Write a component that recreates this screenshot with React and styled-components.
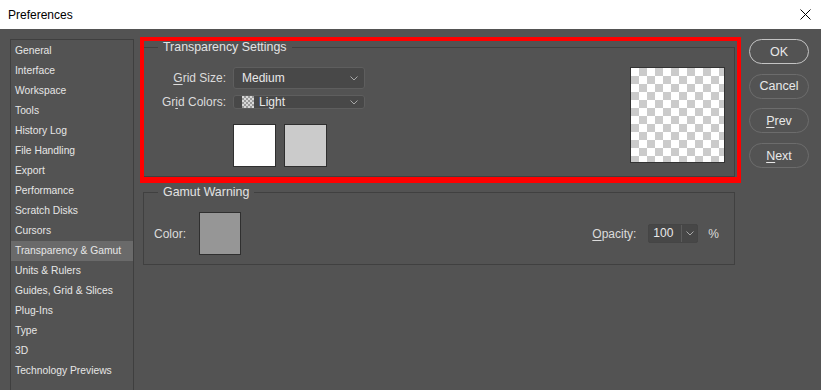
import React from 'react';
import styled, { createGlobalStyle } from 'styled-components';

const Global = createGlobalStyle`
  html, body { margin: 0; padding: 0; }
  body {
    width: 821px; height: 390px; overflow: hidden; background: #535353;
    font-family: "Liberation Sans", Arial, sans-serif;
  }
`;

const Window = styled.div`
  width: 821px; height: 390px; display: flex; flex-direction: column;
  background: #535353; position: relative; overflow: hidden;
`;

const TitleBar = styled.div`
  height: 29px; flex-shrink: 0; background: #fff; display: flex;
  align-items: center; justify-content: space-between;
  padding: 0 10px 0 8px; font-size: 12px; color: #000;
`;

const Body = styled.div`
  flex: 1; display: flex; align-items: flex-start;
  padding: 10px 12px 0 10px;
`;

const Sidebar = styled.div`
  width: 124px; box-sizing: border-box; height: 400px; flex-shrink: 0;
  border: 1px solid #3f3f3f; border-bottom: none; margin-right: 9px;
  padding-top: 1px;
  display: flex; flex-direction: column;
`;

const NavItem = styled.div`
  height: 20px; line-height: 20px; padding-left: 4px; font-size: 10.3px;
  color: #e6e6e6; white-space: nowrap;
  background: ${p => (p.$active ? '#6a6a6a' : 'transparent')};
`;

const Main = styled.div`
  width: 592px; flex-shrink: 0; margin-top: 0; margin-right: 14px;
  display: flex; flex-direction: column; gap: 7px;
`;

const Group = styled.fieldset`
  margin: 0; padding: 0; min-width: 0; box-sizing: border-box;
  border: 1px solid #404040; height: ${p => p.$h}px;
`;

const Legend = styled.legend`
  margin-left: 14px; padding: 0 5px; font-size: 12.4px; line-height: 16px;
  color: #e2e2e2;
`;

const SettingsRow = styled.div`
  display: flex; justify-content: space-between; align-items: flex-start;
  padding: 12px 10px 0 0;
`;

const Form = styled.div`
  display: grid; grid-template-columns: 82px 132px; column-gap: 7px;
  row-gap: 6px; align-items: center;
`;

const Label = styled.span`
  font-size: 12px; color: #dcdcdc; text-align: right; white-space: nowrap;
`;

const U = styled.span` text-decoration: underline; text-underline-offset: 2px; `;

const Select = styled.div`
  height: ${p => p.$h}px; box-sizing: border-box; border: 1px solid #5e5e5e;
  border-radius: 3px; background: #484848; display: flex; align-items: center;
  padding: 0 6px 0 8px; font-size: 12px; color: #e8e8e8; gap: 5px;
`;

const SelectText = styled.span` flex: 1; `;

const CheckerIcon = styled.span`
  width: 12px; height: 12px; flex-shrink: 0;
  background: repeating-conic-gradient(#9a9a9a 0 25%, #d8d8d8 0 50%) 0 0 / 4px 4px;
`;

const Swatches = styled.div`
  grid-column: 2; display: flex; gap: 8px; margin-top: 9px;
`;

const Swatch = styled.div`
  width: ${p => p.$w || 43}px; height: 43px; box-sizing: border-box;
  border: 1px solid #2f2f2f; background: ${p => p.$c};
`;

const Preview = styled.div`
  width: 95px; height: 96px; box-sizing: border-box; border: 1px solid #333;
  margin-right: -1px;
  background: repeating-conic-gradient(#cbcbcb 0 25%, #ffffff 0 50%) 0 0 / 16px 16px;
`;

const GamutRow = styled.div`
  display: flex; align-items: center; padding: 12px 15px 0 10px;
`;

const ColorLabel = styled(Label)` margin-right: 13px; `;

const Spacer = styled.div` flex: 1; `;

const NumberBox = styled.div`
  width: 50px; height: 19px; box-sizing: border-box; margin: 0 10px 0 12px;
  border: 1px solid #454545; border-radius: 2px; background: #474747;
  display: flex; font-size: 12px; color: #eaeaea;
`;

const NumberValue = styled.span`
  flex: 1; padding-left: 4px; line-height: 17px;
  border-right: 1px solid #5c5c5c;
`;

const NumberArrow = styled.span`
  width: 15px; display: flex; align-items: center; justify-content: center;
`;

const Buttons = styled.div`
  width: 60px; display: flex; flex-direction: column; gap: 9.7px;
`;

const Button = styled.div`
  height: 25px; box-sizing: border-box; border-radius: 13px;
  border: ${p => (p.$primary ? '1.5px solid #c4c4c4' : '1px solid #6c6c6c')};
  display: flex; align-items: center; justify-content: center;
  font-size: 12.5px; color: #e8e8e8;
`;

const Highlight = styled.div`
  position: absolute; left: 140px; top: 37px; width: 601px; height: 146px;
  box-sizing: border-box; border: 4px solid #ff0000; border-bottom-width: 6px;
  pointer-events: none;
`;

const Chevron = () => (
  <svg width="8" height="5" viewBox="0 0 8 5">
    <path d="M0.5 0.5 L4 4 L7.5 0.5" fill="none" stroke="#a8a8a8" strokeWidth="1" />
  </svg>
);

const CloseIcon = () => (
  <svg width="11" height="11" viewBox="0 0 11 11">
    <path d="M0.5 0.5 L10.5 10.5 M10.5 0.5 L0.5 10.5" stroke="#000" strokeWidth="1" />
  </svg>
);

const navItems = [
  'General', 'Interface', 'Workspace', 'Tools', 'History Log', 'File Handling',
  'Export', 'Performance', 'Scratch Disks', 'Cursors', 'Transparency & Gamut',
  'Units & Rulers', 'Guides, Grid & Slices', 'Plug-Ins', 'Type', '3D',
  'Technology Previews',
];

export default function App() {
  return (
    <Window>
      <Global />
      <TitleBar>
        <span>Preferences</span>
        <CloseIcon />
      </TitleBar>
      <Body>
        <Sidebar>
          {navItems.map(n => (
            <NavItem key={n} $active={n === 'Transparency & Gamut'}>{n}</NavItem>
          ))}
        </Sidebar>
        <Main>
          <Group $h={138}>
            <Legend>Transparency Settings</Legend>
            <SettingsRow>
              <Form>
                <Label><U>G</U>rid Size:</Label>
                <Select $h={22}>
                  <SelectText>Medium</SelectText>
                  <Chevron />
                </Select>
                <Label>Gr<U>i</U>d Colors:</Label>
                <Select $h={14}>
                  <CheckerIcon />
                  <SelectText>Light</SelectText>
                  <Chevron />
                </Select>
                <Swatches>
                  <Swatch $c="#ffffff" />
                  <Swatch $c="#cbcbcb" />
                </Swatches>
              </Form>
              <Preview />
            </SettingsRow>
          </Group>
          <Group $h={81}>
            <Legend>Gamut Warning</Legend>
            <GamutRow>
              <ColorLabel>Color:</ColorLabel>
              <Swatch $c="#969696" $w={42} />
              <Spacer />
              <Label><U>O</U>pacity:</Label>
              <NumberBox>
                <NumberValue>100</NumberValue>
                <NumberArrow><Chevron /></NumberArrow>
              </NumberBox>
              <Label>%</Label>
            </GamutRow>
          </Group>
        </Main>
        <Buttons>
          <Button $primary>OK</Button>
          <Button>Cancel</Button>
          <Button><U>P</U>rev</Button>
          <Button><U>N</U>ext</Button>
        </Buttons>
      </Body>
      <Highlight />
    </Window>
  );
}
